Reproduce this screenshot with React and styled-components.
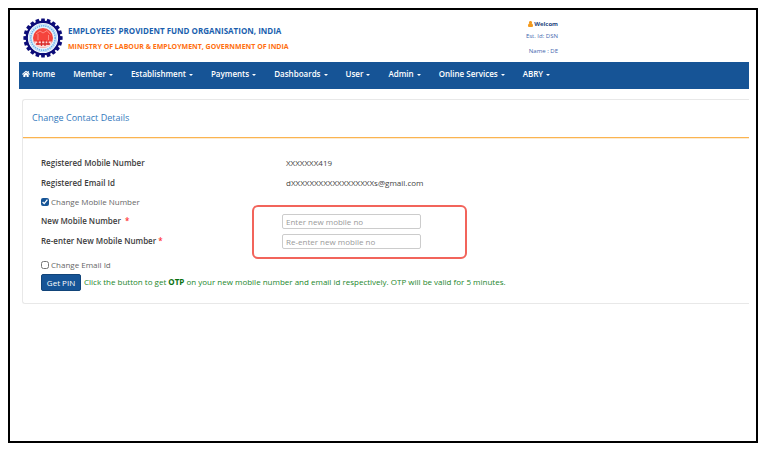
import React, { useState } from 'react';
import styled, { createGlobalStyle } from 'styled-components';
import { FaHome } from 'react-icons/fa';

const menus = ['Member', 'Establishment', 'Payments', 'Dashboards', 'User', 'Admin', 'Online Services', 'ABRY'];
const teeth = Array.from({ length: 20 }, (_, i) => i * 18);

const Logo = () => (
  <LogoMark viewBox="0 0 40 40" role="img" aria-label="EPFO">
    {teeth.map(angle => (
      <path key={angle} d="M18 3.4 L18.3 0.4 H21.7 L22 3.4 Z" fill="#0b0b78" transform={`rotate(${angle} 20 20)`} />
    ))}
    <circle cx="20" cy="20" r="16.2" fill="#fff" stroke="#0b0b78" strokeWidth="2.2" />
    <circle cx="20" cy="20" r="14" fill="#e4f2fc" stroke="#9fcdf3" strokeWidth="0.6" />
    <circle cx="20" cy="20" r="12.2" fill="none" stroke="#6fb3ec" strokeWidth="1.6" strokeDasharray="1.4 0.8" />
    <circle cx="20" cy="20" r="10" fill="#f5443c" />
    <path d="M11 23.5 H29 L27.5 27 C24 30.5 16 30.5 12.5 27 Z" fill="#fbd9d6" />
    <path d="M13 16 L17 13 L20 15 L24 12.5 L27.5 16.5 M15 16 V22 M25.5 17 V22" fill="none" stroke="#ff9c94" strokeWidth="0.8" />
    <path d="M13 26 H27 M15 23 V27 M18.5 22 V28 M22 22 V28 M25 23 V27" fill="none" stroke="#d92a28" strokeWidth="1.3" />
  </LogoMark>
);

const App = () => {
  const [changeMobile, setChangeMobile] = useState(true);
  const [changeEmail, setChangeEmail] = useState(false);

  return (
    <>
      <GlobalStyle />
      <Frame>
        <Header>
          <Logo />
          <Titles>
            <OrgName>EMPLOYEES' PROVIDENT FUND ORGANISATION, INDIA</OrgName>
            <Ministry>MINISTRY OF LABOUR &amp; EMPLOYMENT, GOVERNMENT OF INDIA</Ministry>
          </Titles>
          <Account>
            <Welcome>
              <UserIcon viewBox="0 0 10 12" aria-hidden="true">
                <path d="M5 0 A3 3 0 0 1 7.3 5 C9.2 5.5 10 7.5 10 9.8 Q10 12 8 12 H2 Q0 12 0 9.8 C0 7.5 0.8 5.5 2.7 5 A3 3 0 0 1 5 0 Z" fill="currentColor" />
              </UserIcon>{' '}
              Welcom
            </Welcome>
            <AccountLine>Est. Id: DSN</AccountLine>
            <AccountLine $last>Name : DE</AccountLine>
          </Account>
        </Header>

        <Nav>
          <NavLink href="#home"><FaHome /> Home</NavLink>
          {menus.map(menu => (
            <NavLink key={menu} href="#menu">{menu}<Caret /></NavLink>
          ))}
        </Nav>

        <Panel>
          <PanelTitle>Change Contact Details</PanelTitle>
          <Form onSubmit={e => e.preventDefault()}>
            <Row>
              <Label as="span">Registered Mobile Number</Label>
              <Value>XXXXXXX419</Value>
            </Row>
            <Row>
              <Label as="span">Registered Email Id</Label>
              <Value>dXXXXXXXXXXXXXXXXXXs@gmail.com</Value>
            </Row>
            <CheckLabel>
              <Checkbox type="checkbox" checked={changeMobile} onChange={e => setChangeMobile(e.target.checked)} />
              Change Mobile Number
            </CheckLabel>
            <Fields>
              <Row>
                <Label htmlFor="mobile">New Mobile Number <Required $spaced>*</Required></Label>
                <Input id="mobile" type="text" placeholder="Enter new mobile no" />
              </Row>
              <Row>
                <Label htmlFor="mobile2">Re-enter New Mobile Number <Required>*</Required></Label>
                <Input id="mobile2" type="text" placeholder="Re-enter new mobile no" />
              </Row>
              <Highlight />
            </Fields>
            <CheckLabel>
              <Checkbox type="checkbox" checked={changeEmail} onChange={e => setChangeEmail(e.target.checked)} />
              Change Email Id
            </CheckLabel>
            <Actions>
              <Button type="submit">Get PIN</Button>
              <Hint>
                Click the button to get <b>OTP</b> on your new mobile number and email id respectively. OTP will be valid for 5 minutes.
              </Hint>
            </Actions>
          </Form>
        </Panel>
      </Frame>
    </>
  );
};

// Styled Components
const GlobalStyle = createGlobalStyle`
  * {
    box-sizing: border-box;
  }

  body {
    margin: 0;
    background: #fff;
    color: #444;
    font-family: 'Open Sans', 'Noto Sans', sans-serif;
    font-size: 8px;
    line-height: 12px;
  }
`;

const Frame = styled.div`
  margin: 8px 10px 7px 8px;
  min-height: calc(100vh - 15px);
  padding: 0 7px 0 9px;
  border: 2px solid #000;
`;

const Header = styled.header`
  display: flex;
  align-items: flex-start;
  height: 52px;
  padding: 8px 191px 0 4px;
`;

const LogoMark = styled.svg`
  width: 40px;
  height: 40px;
  flex: none;
`;

const Titles = styled.div`
  flex: 1;
  padding: 7px 0 0 5px;
  white-space: nowrap;
`;

const OrgName = styled.h1`
  margin: 0;
  font-size: 8px;
  font-weight: 700;
  line-height: 12px;
  color: #1b5fae;
`;

const Ministry = styled.h2`
  margin: 4px 0 0;
  font-size: 7px;
  font-weight: 700;
  line-height: 12px;
  color: #ff6f0f;
`;

const Account = styled.div`
  text-align: right;
  font-size: 6px;
  line-height: 12px;
  white-space: nowrap;
`;

const Welcome = styled.div`
  font-weight: 700;
  color: #25477f;
`;

const UserIcon = styled.svg`
  width: 5px;
  height: 6px;
  color: #f39a1e;
  vertical-align: -1px;
`;

const AccountLine = styled.div`
  margin-top: ${props => (props.$last ? '3px' : '0')};
  color: #3f66ae;
`;

const Nav = styled.nav`
  display: flex;
  gap: 18px;
  height: 27px;
  padding: 6px 3px 0;
  background: #165496;
`;

const NavLink = styled.a`
  color: #fff;
  font-size: 8px;
  font-weight: 600;
  line-height: 12px;
  text-decoration: none;
  white-space: nowrap;

  svg {
    vertical-align: -1px;
  }
`;

const Caret = styled.span`
  display: inline-block;
  margin-left: 3px;
  vertical-align: 1px;
  border-top: 2px solid #fff;
  border-left: 2px solid transparent;
  border-right: 2px solid transparent;
`;

const Panel = styled.main`
  margin: 10px 0 0 3px;
  border: 1px solid #e8e8e8;
  border-right: 0;
  border-radius: 3px 0 0 3px;
`;

const PanelTitle = styled.h3`
  margin: 0;
  padding: 12px 9px 13px;
  border-bottom: 1px solid #fbb450;
  box-shadow: 0 1px #fdebd2;
  font-size: 9px;
  font-weight: 400;
  line-height: 12px;
  color: #3379bd;
`;

const Form = styled.form`
  padding: 15px 18px 12px;
`;

const Row = styled.div`
  display: grid;
  grid-template-columns: 241px 1fr;
  align-items: center;
  height: 20px;
`;

const Label = styled.label`
  font-weight: 600;
  color: #3c3c3c;
`;

const Required = styled.span`
  margin-left: ${props => (props.$spaced ? '2px' : '0')};
  color: #f33;
`;

const Value = styled.span`
  padding-left: 4px;
`;

const CheckLabel = styled.label`
  display: flex;
  align-items: center;
  gap: 2px;
  width: max-content;
  height: 18px;
  color: #666;
`;

const Checkbox = styled.input`
  width: 8px;
  height: 8px;
  margin: 0;
  accent-color: #165496;
`;

const Fields = styled.div`
  position: relative;
  margin-bottom: 5px;
`;

const Highlight = styled.div`
  position: absolute;
  top: -6px;
  left: 211px;
  width: 215px;
  height: 54px;
  border: 2px solid #f2645b;
  border-radius: 6px;
  pointer-events: none;
`;

const Input = styled.input`
  width: 139px;
  height: 15px;
  padding: 0 3px;
  border: 1px solid #ccc;
  border-radius: 2px;
  color: #444;
  font: inherit;

  &::placeholder {
    color: #999;
  }
`;

const Actions = styled.div`
  display: flex;
  gap: 3px;
`;

const Button = styled.button`
  width: 40px;
  height: 17px;
  padding: 0;
  border: 1px solid #114479;
  border-radius: 2px;
  background: #165496;
  color: #fff;
  font: inherit;
  cursor: pointer;
`;

const Hint = styled.p`
  margin: 2px 0 0;
  color: #23872b;

  b {
    color: #08700f;
  }
`;

export default App;
